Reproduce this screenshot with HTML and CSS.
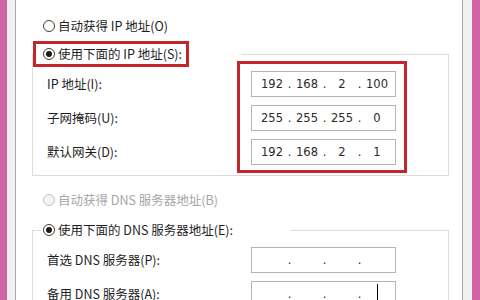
FILE: index.html
```html
<!DOCTYPE html>
<html lang="zh-CN">
<head>
<meta charset="utf-8">
<title>IPv4 属性</title>
<link rel="stylesheet" href="styles.css">
</head>
<body>
<div class="frame">
  <div class="edge-pink"></div>
  <div class="edge-grey edge-left"></div>
  <main class="panel">
    <div class="opt">
      <span class="radio"></span><span>自动获得 IP 地址(O)</span>
    </div>

    <fieldset class="group group-ip">
      <legend class="legend legend-ip">
        <span class="mark"><span class="radio checked"></span><span>使用下面的 IP 地址(S):</span></span>
      </legend>
      <div class="group-body">
        <div class="labels">
          <div class="lbl">IP 地址(I):</div>
          <div class="lbl">子网掩码(U):</div>
          <div class="lbl">默认网关(D):</div>
        </div>
        <div class="fields mark-box">
          <div class="ipbox"><span class="oct">192</span><span class="dot">.</span><span class="oct">168</span><span class="dot">.</span><span class="oct">2</span><span class="dot">.</span><span class="oct">100</span></div>
          <div class="ipbox"><span class="oct">255</span><span class="dot">.</span><span class="oct">255</span><span class="dot">.</span><span class="oct">255</span><span class="dot">.</span><span class="oct">0</span></div>
          <div class="ipbox"><span class="oct">192</span><span class="dot">.</span><span class="oct">168</span><span class="dot">.</span><span class="oct">2</span><span class="dot">.</span><span class="oct">1</span></div>
        </div>
      </div>
    </fieldset>

    <div class="opt opt-dns disabled">
      <span class="radio"></span><span>自动获得 DNS 服务器地址(B)</span>
    </div>

    <fieldset class="group group-dns">
      <legend class="legend legend-dns">
        <span class="radio checked"></span><span>使用下面的 DNS 服务器地址(E):</span>
      </legend>
      <div class="group-body body-dns">
        <div class="labels">
          <div class="lbl">首选 DNS 服务器(P):</div>
          <div class="lbl">备用 DNS 服务器(A):</div>
        </div>
        <div class="fields">
          <div class="ipbox"><span class="oct"></span><span class="dot">.</span><span class="oct"></span><span class="dot">.</span><span class="oct"></span><span class="dot">.</span><span class="oct"></span></div>
          <div class="ipbox"><span class="oct"></span><span class="dot">.</span><span class="oct"></span><span class="dot">.</span><span class="oct"></span><span class="dot">.</span><span class="oct"><span class="caret"></span></span></div>
        </div>
      </div>
    </fieldset>
  </main>
  <div class="edge-grey edge-right"></div>
  <div class="edge-pink"></div>
</div>
</body>
</html>
```

FILE: styles.css
```css
html, body {
  margin: 0;
  padding: 0;
  width: 480px;
  height: 300px;
  overflow: hidden;
  background: #ffffff;
}

body {
  font-family: "Noto Sans CJK SC", "Noto Sans", sans-serif;
  font-size: 12.5px;
  color: #1e1e1e;
}

.frame {
  display: flex;
  height: 300px;
}

.edge-pink {
  width: 8px;
  flex: none;
  background: #d064a4;
}
.frame > .edge-pink:first-child {
  width: 7px;
}

.edge-grey {
  flex: none;
  background: #f0f0f0;
}
.edge-left {
  width: 8px;
  border-right: 1px solid #a8a8a8;
}
.edge-right {
  width: 9px;
  border-left: 1px solid #a8a8a8;
}

.panel {
  flex: 1;
  min-width: 0;
  padding: 16px 13px 0 16px;
  overflow: hidden;
}

.opt {
  display: flex;
  align-items: center;
  gap: 3px;
  height: 20px;
  padding-left: 11px;
  line-height: 20px;
}

.opt-dns {
  margin-top: 14px;
}

.opt.disabled {
  color: #a6a6a6;
}

.radio {
  display: inline-block;
  box-sizing: border-box;
  width: 12px;
  height: 12px;
  flex: none;
  border: 1px solid #3c3c3c;
  border-radius: 50%;
  background: #ffffff;
  position: relative;
}
.radio.checked::after {
  content: "";
  position: absolute;
  left: 2px;
  top: 2px;
  width: 6px;
  height: 6px;
  border-radius: 50%;
  background: #1a1a1a;
}
.opt.disabled .radio {
  border-color: #c4c4c4;
  background: #f4f4f4;
}

.group {
  margin: 5px 0 0 0;
  padding: 0;
  border: 1px solid #dcdcdc;
  min-width: 0;
}

.group-dns {
  margin-top: 10px;
}

.legend {
  padding: 0;
  line-height: 20px;
}

.legend-ip {
  margin-left: 0;
  padding-right: 52px;
}

.mark {
  display: flex;
  align-items: center;
  gap: 3px;
  border: 3px solid #c1272d;
  padding: 0 4px 0 7px;
}

.legend-dns {
  margin-left: 8px;
  padding: 0 58px 0 2px;
  display: flex;
  align-items: center;
  gap: 3px;
}

.group-body {
  display: flex;
  padding: 0 0 2px 14px;
}

.labels {
  width: 190px;
  flex: none;
  display: flex;
  flex-direction: column;
  gap: 8px;
  padding-top: 4px;
}

.lbl {
  height: 26px;
  line-height: 26px;
}

.fields {
  display: flex;
  flex-direction: column;
  gap: 8px;
  padding: 7px 8px 5px 11px;
  border: 3px solid transparent;
}

.mark-box {
  margin-top: -6px;
  border-color: #c1272d;
}

.body-dns .labels {
  padding-top: 7px;
}
.body-dns .fields {
  padding-top: 4px;
}

.ipbox {
  box-sizing: border-box;
  width: 145px;
  height: 26px;
  border: 1px solid #b4b4b4;
  background: #ffffff;
  display: flex;
  align-items: center;
  padding-left: 6px;
  font-family: "DejaVu Sans", "Noto Sans", sans-serif;
  font-size: 11.5px;
  color: #2a2a2a;
}

.oct {
  width: 28px;
  flex: none;
  text-align: center;
  position: relative;
  height: 24px;
  line-height: 24px;
}

.dot {
  width: 7px;
  flex: none;
  text-align: center;
  line-height: 24px;
}

.caret {
  position: absolute;
  left: 50%;
  top: 2px;
  width: 1px;
  height: 20px;
  background: #000000;
}
```
